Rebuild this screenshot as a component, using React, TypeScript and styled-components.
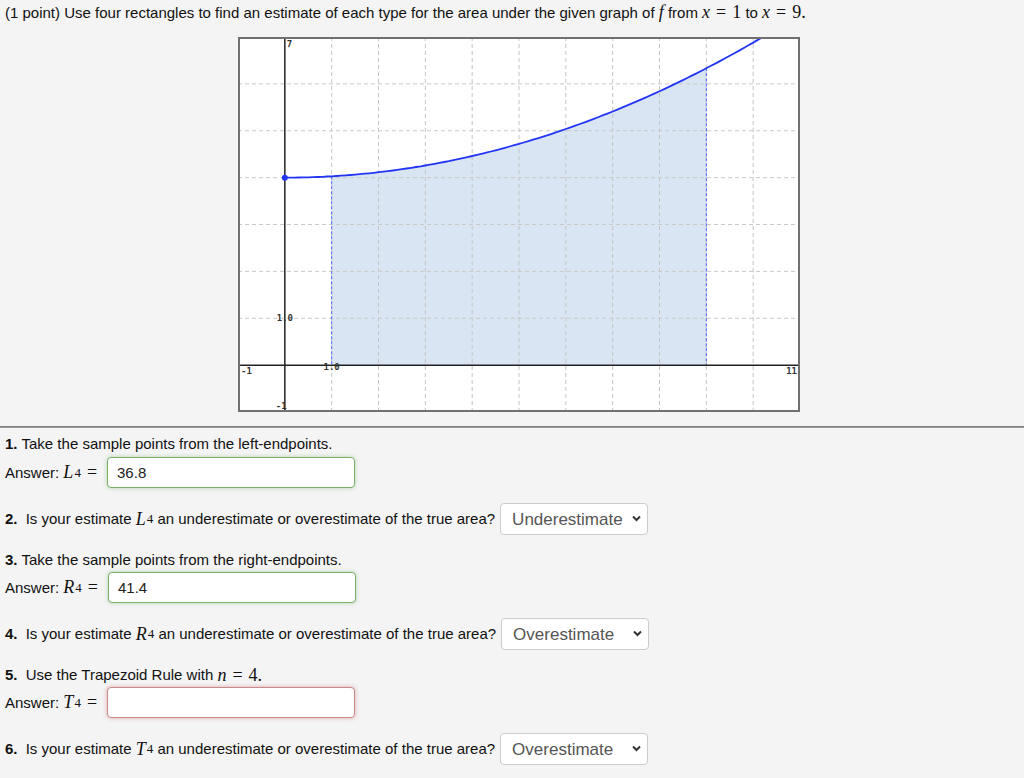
import React from "react";
import styled, { createGlobalStyle } from "styled-components";

const GlobalStyle = createGlobalStyle`
  body {
    margin: 0;
    background: #f4f4f4;
    font-family: "Liberation Sans", Arial, sans-serif;
    color: #111;
  }
`;

const Page = styled.div`
  padding: 2px 0 12px;
`;

const Title = styled.p`
  margin: 0 0 14px 5px;
  font-size: 15px;
  line-height: 20px;
`;

const GraphBox = styled.div`
  width: 562px;
  height: 375px;
  margin-left: 238px;

  svg {
    display: block;
  }
`;

const Rule = styled.hr`
  margin: 14px 0 6px;
  border: 0;
  height: 2px;
  background: linear-gradient(#6f6f6f, #a9a9a9);
`;

const Parts = styled.div`
  padding-left: 5px;
`;

const Part = styled.div`
  margin-bottom: 15px;
`;

const Line = styled.div`
  font-size: 15px;
  line-height: 20px;
  display: flex;
  align-items: center;
`;

const Num = styled.b`
  font-weight: 700;
  margin-right: 4px;
`;

const AnswerRow = styled.div<{ $gap: number }>`
  display: flex;
  align-items: center;
  margin-top: ${(p) => p.$gap}px;
  font-size: 15px;
`;

const M = styled.span`
  font-family: "Liberation Serif", "Times New Roman", serif;
  font-style: italic;
  font-size: 18px;
`;

const MUp = styled.span`
  font-family: "Liberation Serif", "Times New Roman", serif;
  font-size: 18px;
`;

const Sub = styled.sub`
  font-family: "Liberation Serif", "Times New Roman", serif;
  font-style: normal;
  font-size: 13px;
  vertical-align: -4px;
  line-height: 0;
  margin-left: 1px;
`;

const Eq = styled.span`
  font-family: "Liberation Serif", "Times New Roman", serif;
  font-size: 18px;
  margin: 0 6px;
`;

const AnswerInput = styled.input<{ $state: "ok" | "bad" }>`
  box-sizing: border-box;
  width: 248px;
  height: 31px;
  margin-left: 4px;
  padding: 0 9px;
  font-family: "Liberation Sans", Arial, sans-serif;
  font-size: 15px;
  color: #222;
  background: #fff;
  border-radius: 4px;
  outline: none;
  border: 1px solid ${(p) => (p.$state === "ok" ? "#79b16b" : "#c98a8a")};
  box-shadow: 0 0 4px
    ${(p) => (p.$state === "ok" ? "rgba(100, 170, 90, 0.45)" : "rgba(190, 80, 80, 0.45)")};
`;

const SelectWrap = styled.span`
  position: relative;
  display: inline-block;
  margin-left: 5px;
`;

const Select = styled.select`
  appearance: none;
  box-sizing: border-box;
  width: 148px;
  height: 32px;
  padding: 0 24px 0 11px;
  font-family: "Liberation Sans", Arial, sans-serif;
  font-size: 17px;
  color: #555;
  background: #fff;
  border: 1px solid #ccc;
  border-radius: 4px;
`;

const Chevron = styled.svg`
  position: absolute;
  right: 7px;
  top: 12px;
  pointer-events: none;
`;

const W = 562;
const H = 375;
const px = (x: number) => ((x + 1) * W) / 12;
const py = (y: number) => ((7 - y) * H) / 8;
const f = (x: number) => 4 + 0.0288 * x * x;

const Graph = () => {
  const curve: string[] = [];
  for (let x = 0; x <= 10.2; x += 0.1) curve.push(`${px(x).toFixed(1)},${py(f(x)).toFixed(1)}`);
  curve.push(`${px(10.206).toFixed(1)},${py(7).toFixed(1)}`);

  const area: string[] = [`${px(1)},${py(0)}`];
  for (let x = 1; x <= 9.001; x += 0.1) area.push(`${px(x).toFixed(1)},${py(f(x)).toFixed(1)}`);
  area.push(`${px(9)},${py(f(9))}`, `${px(9)},${py(0)}`);

  const gridX = [1, 2, 3, 4, 5, 6, 7, 8, 9, 10];
  const gridY = [1, 2, 3, 4, 5, 6];
  const label = {
    fontFamily: '"DejaVu Sans Mono", monospace',
    fontSize: 9,
    fontWeight: 700,
    fill: "#333",
  };

  return (
    <svg width={W} height={H} viewBox={`0 0 ${W} ${H}`}>
      <rect x={0} y={0} width={W} height={H} fill="#fff" />
      <polygon points={area.join(" ")} fill="#d9e5f3" />
      {gridX.map((g) => (
        <line key={`gx${g}`} x1={px(g)} x2={px(g)} y1={0} y2={H} stroke="#c4c4c4" strokeDasharray="4 3" />
      ))}
      {gridY.map((g) => (
        <line key={`gy${g}`} x1={0} x2={W} y1={py(g)} y2={py(g)} stroke="#c9c9c9" strokeDasharray="4 3" />
      ))}
      <line x1={px(1)} x2={px(1)} y1={py(f(1))} y2={py(0)} stroke="#4a63ff" strokeDasharray="3 2" />
      <line x1={px(9)} x2={px(9)} y1={py(f(9))} y2={py(0)} stroke="#4a63ff" strokeDasharray="3 2" />
      <line x1={0} x2={W} y1={py(0)} y2={py(0)} stroke="#222" strokeWidth={1.5} />
      <line x1={px(0)} x2={px(0)} y1={0} y2={H} stroke="#222" strokeWidth={1.5} />
      <polyline points={curve.join(" ")} fill="none" stroke="#2336f5" strokeWidth={1.8} />
      <circle cx={px(0)} cy={py(f(0))} r={3} fill="#2336f5" />
      <text {...label} x={px(0) + 2} y={10}>7</text>
      <text {...label} x={px(0)} y={py(1) + 3} textAnchor="middle">1.0</text>
      <text {...label} x={px(1)} y={py(0) + 5} textAnchor="middle">1.0</text>
      <text {...label} x={3} y={py(0) + 9}>-1</text>
      <text {...label} x={W - 3} y={py(0) + 9} textAnchor="end">11</text>
      <text {...label} x={px(0) - 9} y={H - 3}>-1</text>
      <rect x={1} y={1} width={W - 2} height={H - 2} fill="none" stroke="#707070" strokeWidth={2} />
    </svg>
  );
};

const Arrow = () => (
  <Chevron width="9" height="7" viewBox="0 0 9 7">
    <path d="M1 1.5 L4.5 5 L8 1.5" fill="none" stroke="#333" strokeWidth="2" />
  </Chevron>
);

const Choice = ({ value }: { value: string }) => (
  <SelectWrap>
    <Select defaultValue={value}>
      <option>?</option>
      <option>Underestimate</option>
      <option>Overestimate</option>
    </Select>
    <Arrow />
  </SelectWrap>
);

const Sym = ({ s }: { s: string }) => (
  <>
    <M>{s}</M>
    <Sub>4</Sub>
  </>
);

export default function App() {
  return (
    <Page>
      <GlobalStyle />
      <Title>
        (1 point) Use four rectangles to find an estimate of each type for the area under the given graph of{" "}
        <M>f</M> from <M>x</M>
        <Eq>=</Eq>
        <MUp>1</MUp> to <M>x</M>
        <Eq>=</Eq>
        <MUp>9.</MUp>
      </Title>

      <GraphBox>
        <Graph />
      </GraphBox>

      <Rule />

      <Parts>
        <Part>
          <Line>
            <Num>1.</Num> Take the sample points from the left-endpoints.
          </Line>
          <AnswerRow $gap={3}>
            Answer:&nbsp;<Sym s="L" />
            <Eq>=</Eq>
            <AnswerInput $state="ok" defaultValue="36.8" />
          </AnswerRow>
        </Part>

        <Part>
          <Line>
            <Num>2.</Num>&nbsp;Is your estimate&nbsp;<Sym s="L" />&nbsp;an underestimate or overestimate of the true area?
            <Choice value="Underestimate" />
          </Line>
        </Part>

        <Part>
          <Line>
            <Num>3.</Num> Take the sample points from the right-endpoints.
          </Line>
          <AnswerRow $gap={2}>
            Answer:&nbsp;<Sym s="R" />
            <Eq>=</Eq>
            <AnswerInput $state="ok" defaultValue="41.4" />
          </AnswerRow>
        </Part>

        <Part>
          <Line>
            <Num>4.</Num>&nbsp;Is your estimate&nbsp;<Sym s="R" />&nbsp;an underestimate or overestimate of the true area?
            <Choice value="Overestimate" />
          </Line>
        </Part>

        <Part>
          <Line>
            <Num>5.</Num>&nbsp;Use the Trapezoid Rule with&nbsp;<M>n</M>
            <Eq>=</Eq>
            <MUp>4.</MUp>
          </Line>
          <AnswerRow $gap={2}>
            Answer:&nbsp;<Sym s="T" />
            <Eq>=</Eq>
            <AnswerInput $state="bad" defaultValue="" />
          </AnswerRow>
        </Part>

        <Part>
          <Line>
            <Num>6.</Num>&nbsp;Is your estimate&nbsp;<Sym s="T" />&nbsp;an underestimate or overestimate of the true area?
            <Choice value="Overestimate" />
          </Line>
        </Part>
      </Parts>
    </Page>
  );
}
